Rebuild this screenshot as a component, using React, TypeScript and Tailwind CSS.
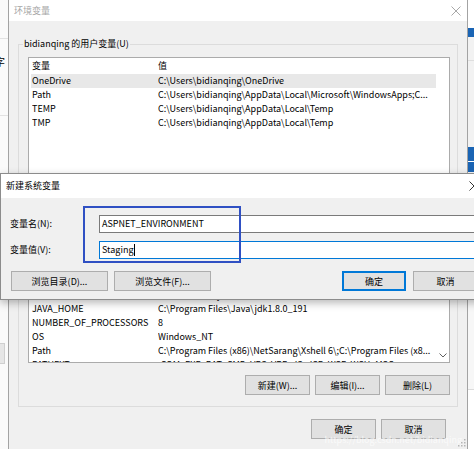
import type { ReactNode } from "react"

type VarRow = [string, string]

const userVars: VarRow[] = [
  ["OneDrive", "C:\\Users\\bidianqing\\OneDrive"],
  ["Path", "C:\\Users\\bidianqing\\AppData\\Local\\Microsoft\\WindowsApps;C..."],
  ["TEMP", "C:\\Users\\bidianqing\\AppData\\Local\\Temp"],
  ["TMP", "C:\\Users\\bidianqing\\AppData\\Local\\Temp"],
]

const systemVars: VarRow[] = [
  ["ComSpec", "C:\\Windows\\system32\\cmd.exe"],
  ["DriverData", "C:\\Windows\\System32\\Drivers\\DriverData"],
  ["JAVA_HOME", "C:\\Program Files\\Java\\jdk1.8.0_191"],
  ["NUMBER_OF_PROCESSORS", "8"],
  ["OS", "Windows_NT"],
  ["Path", "C:\\Program Files (x86)\\NetSarang\\Xshell 6\\;C:\\Program Files (x8..."],
  ["PATHEXT", ".COM;.EXE;.BAT;.CMD;.VBS;.VBE;.JS;.JSE;.WSF;.WSH;.MSC"],
]

function CloseIcon({ color }: { color: string }) {
  return (
    <svg width="10" height="10" viewBox="0 0 10 10">
      <path d="M0.5 0.5 L9.5 9.5 M9.5 0.5 L0.5 9.5" stroke={color} strokeWidth="1" fill="none" />
    </svg>
  )
}

function WinButton({ children, className = "", primary = false }: { children: ReactNode; className?: string; primary?: boolean }) {
  return (
    <div
      className={`flex h-[20px] items-center justify-center whitespace-nowrap bg-[#e1e1e1] leading-none ${
        primary ? "border-2 border-[#0078d7]" : "border border-[#adadad]"
      } ${className}`}
    >
      {children}
    </div>
  )
}

function VarList({ rows, selected, height, scroll }: { rows: VarRow[]; selected?: number; height: string; scroll?: boolean }) {
  return (
    <div className={`ml-[9px] flex w-[422px] overflow-hidden border border-[#ababab] bg-white ${height}`}>
      <div className="ml-[2px] w-[405px]">
        <div className="grid h-[16px] grid-cols-[126px_1fr] items-center pl-[1px]">
          <span>变量</span>
          <span>值</span>
        </div>
        {rows.map(([name, value], i) => (
          <div
            key={name + i}
            className={`grid h-[14px] grid-cols-[126px_1fr] pl-[1px] leading-[14px] ${i === selected ? "bg-[#e8e8e8]" : ""}`}
          >
            <span className="overflow-hidden whitespace-nowrap">{name}</span>
            <span className="overflow-hidden whitespace-nowrap">{value}</span>
          </div>
        ))}
      </div>
      <div className="flex flex-1 flex-col items-center justify-end pb-[4px]">
        {scroll && (
          <svg width="8" height="5" viewBox="0 0 8 5">
            <path d="M0.5 0.5 L4 4 L7.5 0.5" stroke="#606060" strokeWidth="1" fill="none" />
          </svg>
        )}
      </div>
    </div>
  )
}

function ButtonRow({ labels }: { labels: string[] }) {
  return (
    <div className="ml-[9px] flex w-[422px] justify-end gap-[5px]">
      {labels.map((l) => (
        <WinButton key={l} className="w-[65px]">
          {l}
        </WinButton>
      ))}
    </div>
  )
}

// the "环境变量" window sitting behind
function EnvDialog() {
  return (
    <div className="absolute left-[8px] top-0 flex h-[460px] w-[460px] flex-col border-x border-[#a3a3a3] bg-[#f0f0f0]">
      <div className="flex h-[21px] items-center justify-between bg-white">
        <span className="pl-[5px] text-[#a6a6a6]">环境变量</span>
        <span className="flex w-[22px] justify-center">
          <CloseIcon color="#a8a8a8" />
        </span>
      </div>
      <div className="pl-[9px] pt-[15px]">
        <fieldset className="w-[440px] border border-[#dcdcdc] pb-[8px]">
          <legend className="ml-[4px] px-[1px] leading-[16px]">bidianqing 的用户变量(U)</legend>
          <div className="mt-[5px]">
            <VarList rows={userVars} selected={0} height="h-[138px]" />
          </div>
          <div className="mt-[7px]">
            <ButtonRow labels={["新建(N)...", "编辑(E)...", "删除(D)"]} />
          </div>
        </fieldset>
        <fieldset className="mt-[6px] w-[440px] border border-[#dcdcdc] pb-[11px]">
          <legend className="ml-[4px] px-[1px] leading-[16px]">系统变量(S)</legend>
          <div className="mt-[4px]">
            <VarList rows={systemVars} height="h-[106px]" scroll />
          </div>
          <div className="mt-[12px]">
            <ButtonRow labels={["新建(W)...", "编辑(I)...", "删除(L)"]} />
          </div>
        </fieldset>
        <div className="mt-[12px] flex justify-end gap-[5px] pr-[21px]">
          <WinButton className="w-[65px]">确定</WinButton>
          <WinButton className="w-[65px]">取消</WinButton>
        </div>
      </div>
    </div>
  )
}

// the "新建系统变量" dialog on top
function NewVarDialog() {
  return (
    <div className="absolute left-0 top-[173px] flex h-[127px] w-[490px] flex-col border border-[#8c8c8c] bg-[#f0f0f0] shadow-[0_3px_8px_rgba(0,0,0,0.28)]">
      <div className="flex h-[24px] items-center justify-between bg-white">
        <span className="pl-[5px]">新建系统变量</span>
        <span className="flex w-[24px] justify-center pr-[6px]">
          <CloseIcon color="#333333" />
        </span>
      </div>
      <div className="flex flex-col pt-[17px]">
        <div className="flex items-center">
          <span className="w-[98px] pl-[9px]">变量名(N):</span>
          <div className="mr-[10px] flex h-[18px] flex-1 items-center border border-[#7a7a7a] bg-white pl-[2px]">ASPNET_ENVIRONMENT</div>
        </div>
        <div className="mt-[8px] flex items-center">
          <span className="w-[98px] pl-[9px]">变量值(V):</span>
          <div className="mr-[10px] flex h-[18px] flex-1 items-center border border-[#0078d7] bg-white pl-[2px]">
            Staging
            <span className="ml-px h-[12px] w-px bg-black" />
          </div>
        </div>
        <div className="mt-[12px] flex pl-[10px] pr-[11px]">
          <WinButton className="w-[97px]">浏览目录(D)...</WinButton>
          <WinButton className="ml-[6px] w-[97px]">浏览文件(F)...</WinButton>
          <WinButton primary className="ml-auto w-[64px]">
            确定
          </WinButton>
          <WinButton className="ml-[7px] w-[65px]">取消</WinButton>
        </div>
      </div>
    </div>
  )
}

export default function App() {
  return (
    <div className="relative h-[449px] w-[474px] overflow-hidden bg-[#f7f7f7] text-[9px] text-black font-['Noto_Sans_CJK_SC',sans-serif]">
      {/* system properties window peeking out on the left */}
      <div className="absolute left-0 top-0 h-full w-[8px] overflow-hidden bg-[#fafafa]">
        <div className="mt-[38px] h-px bg-[#e2e2e2]" />
        <div className="-ml-[5px] mt-[16px] h-[14px] text-[10px] leading-[14px]">字</div>
        <div className="mt-[46px] h-px bg-[#e2e2e2]" />
        <div className="mt-[227px] h-[21px] w-[5px] border-y border-r border-[#cfcfcf] bg-[#e6e6e6]" />
      </div>

      {/* another window on the right edge */}
      <div className="absolute left-[468px] top-0 flex h-full w-[6px] flex-col bg-white">
        <div className="h-[28px]" />
        <div className="h-[9px] bg-[#1a64b4]" />
        <div className="h-[24px] border-b border-[#dedede] bg-[#f2f2f2]" />
        <div className="h-[86px] bg-[#f2f2f2]" />
        <div className="h-[15px] border-b border-white bg-[#1a64b4]" />
        <div className="h-[10px] bg-[#1a64b4]" />
        <div className="h-[218px] border-b border-[#dcdcdc] bg-[#f7f7f7]" />
      </div>

      <EnvDialog />
      <NewVarDialog />

      {/* highlight box drawn around the two fields */}
      <div className="absolute left-[83px] top-[206px] h-[57px] w-[158px] border-2 border-[#2f50c3]" />

      <span className="absolute bottom-[3px] right-[12px] text-[9px] text-white/70">https://blog.csdn.net/bidianqing</span>

      <svg className="absolute bottom-[2px] right-[8px]" width="8" height="8" viewBox="0 0 8 8">
        <g fill="#b5b5b5">
          <rect x="6" y="0" width="1.5" height="1.5" />
          <rect x="3" y="3" width="1.5" height="1.5" />
          <rect x="6" y="3" width="1.5" height="1.5" />
          <rect x="0" y="6" width="1.5" height="1.5" />
          <rect x="3" y="6" width="1.5" height="1.5" />
          <rect x="6" y="6" width="1.5" height="1.5" />
        </g>
      </svg>
    </div>
  )
}
